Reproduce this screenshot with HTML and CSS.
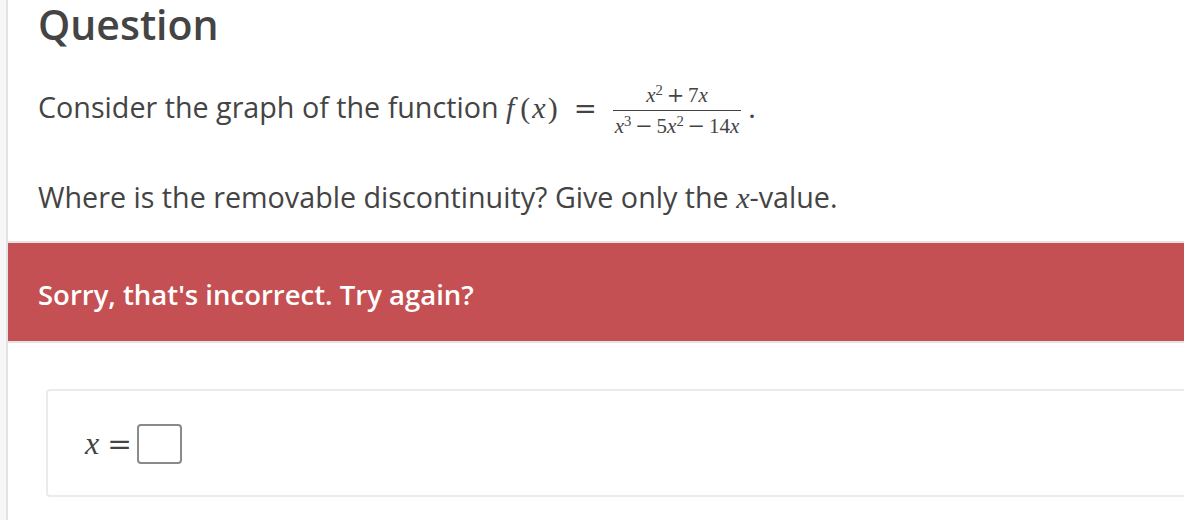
FILE: index.html
```html
<!DOCTYPE html>
<html lang="en">
<head>
    <meta charset="UTF-8">
    <meta name="viewport" content="width=device-width, initial-scale=1.0">
    <title>Question</title>
    <link rel="stylesheet" href="styles.css">
</head>
<body>
    <div class="page">
        <div class="question">
            <h1>Question</h1>
            <p class="prompt">Consider the graph of the function <span class="math"><i class="fn">f</i><span class="paren">(</span><i>x</i><span class="paren">)</span><span class="eq">=</span><span class="frac"><span class="num"><i>x</i><sup>2</sup><span class="op">+</span>7<i>x</i></span><span class="den"><i>x</i><sup>3</sup><span class="op">&minus;</span>5<i>x</i><sup>2</sup><span class="op">&minus;</span>14<i>x</i></span></span><span class="dot">.</span></span></p>
            <p class="prompt second">Where is the removable discontinuity? Give only the <span class="math"><i>x</i></span>-value.</p>
        </div>

        <div class="feedback">Sorry, that's incorrect. Try again?</div>

        <div class="answer">
            <div class="answer-box">
                <span class="math"><i>x</i><span class="eq">=</span></span>
                <input type="text" class="answer-input">
            </div>
        </div>
    </div>
</body>
</html>
```

FILE: styles.css
```css
body {
    margin: 0;
    background: #f7f7f7;
    font-family: "Open Sans", "Liberation Sans", sans-serif;
    color: #444;
    overflow: hidden;
}
.page {
    margin-left: 6px;
    border-left: 2px solid #e3e3e3;
    background: #fff;
    min-height: 520px;
}
.question {
    padding: 0 30px;
}
h1 {
    font-size: 41px;
    font-weight: 600;
    margin: 0;
    line-height: 48px;
}
.prompt {
    font-size: 28.7px;
    line-height: 38px;
    margin: 40px 0 0;
}
.prompt.second {
    margin-top: 50px;
}
.math {
    font-family: "Liberation Serif", "DejaVu Serif", serif;
    font-size: 30px;
    white-space: nowrap;
}
.math i {
    font-style: italic;
}
.fn {
    margin-right: 4px;
}
.paren {
    margin: 0 2px;
}
.eq,
.op {
    font-family: "DejaVu Serif", serif;
}
.eq {
    font-size: 0.92em;
    margin: 0 16px 0 14px;
}
.op {
    margin: 0 0.18em;
}
.frac {
    display: inline-flex;
    flex-direction: column;
    align-items: center;
    vertical-align: 16px;
    font-size: 21px;
    margin: -20px 0;
}
.frac .num {
    align-self: stretch;
    text-align: center;
    line-height: 20px;
    padding-bottom: 5px;
    border-bottom: 1.5px solid #444;
}
.frac .den {
    line-height: 24px;
    padding: 2.5px 2px 0;
}
.frac sup {
    font-size: 0.7em;
    line-height: 0;
    vertical-align: 0.5em;
}
.dot {
    margin-left: 7px;
}
.feedback {
    margin-top: 24px;
    border-top: 2px solid #e3e3e3;
    border-bottom: 2px solid #e3e3e3;
    background: #c45053;
    color: #fff;
    font-size: 27.5px;
    font-weight: 600;
    padding: 3px 30px 0;
    height: 95px;
    line-height: 98px;
}
.answer {
    padding: 46px 0 0 38px;
}
.answer-box {
    margin-right: -20px;
    border: 2px solid #ebebeb;
    border-radius: 4px;
    height: 108px;
    display: flex;
    align-items: center;
    padding-left: 37px;
    box-sizing: border-box;
}
.answer-box .math {
    font-size: 32px;
}
.answer-box .eq {
    margin: 0 5px 0 8px;
}
.answer-input {
    width: 45px;
    height: 40px;
    box-sizing: border-box;
    border: 2px solid #8a8a8a;
    border-radius: 4px;
    margin: 1px 0 0;
}
```
